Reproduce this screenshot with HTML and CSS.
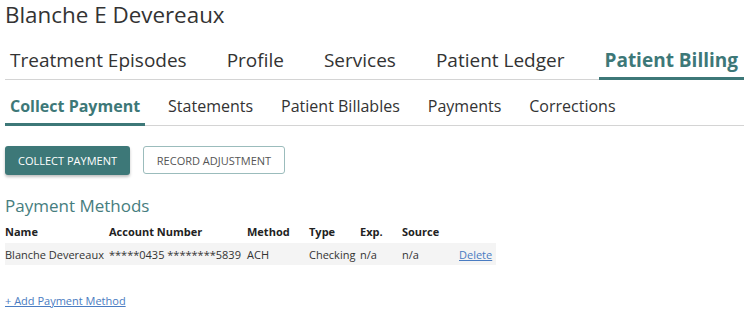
FILE: index.html
```html
<!DOCTYPE html>
<html lang="en">
<head>
    <meta charset="UTF-8">
    <meta name="viewport" content="width=device-width, initial-scale=1.0">
    <title>Patient Billing</title>
    <link rel="stylesheet" href="styles.css">
</head>
<body>
    <div class="page">
        <h1 class="patient-name">Blanche E Devereaux</h1>

        <div class="tabs">
            <a class="tab">Treatment Episodes</a>
            <a class="tab">Profile</a>
            <a class="tab">Services</a>
            <a class="tab">Patient Ledger</a>
            <a class="tab active">Patient Billing</a>
        </div>

        <div class="subtabs">
            <a class="subtab active">Collect Payment</a>
            <a class="subtab">Statements</a>
            <a class="subtab">Patient Billables</a>
            <a class="subtab">Payments</a>
            <a class="subtab">Corrections</a>
        </div>

        <div class="actions">
            <button class="btn btn-primary">COLLECT PAYMENT</button>
            <button class="btn btn-outline">RECORD ADJUSTMENT</button>
        </div>

        <h2 class="section-title">Payment Methods</h2>
        <table class="methods">
            <colgroup>
                <col class="c-name">
                <col class="c-acct">
                <col class="c-method">
                <col class="c-type">
                <col class="c-exp">
                <col class="c-source">
                <col class="c-del">
            </colgroup>
            <thead>
                <tr>
                    <th>Name</th>
                    <th>Account Number</th>
                    <th>Method</th>
                    <th>Type</th>
                    <th>Exp.</th>
                    <th>Source</th>
                    <th></th>
                </tr>
            </thead>
            <tbody>
                <tr>
                    <td>Blanche Devereaux</td>
                    <td>*****0435 ********5839</td>
                    <td>ACH</td>
                    <td>Checking</td>
                    <td>n/a</td>
                    <td>n/a</td>
                    <td><a href="#" class="link">Delete</a></td>
                </tr>
            </tbody>
        </table>

        <a href="#" class="link add-link">+ Add Payment Method</a>
    </div>
</body>
</html>
```

FILE: styles.css
```css
*{
    margin: 0;
    padding: 0;
    box-sizing: border-box;
    font-family: "Open Sans", sans-serif;
}
body{
    background: #fff;
    color: #333;
}
.page{
    padding: 0 0 0 5px;
}
.patient-name{
    font-size: 22.4px;
    font-weight: 400;
    line-height: 30px;
    margin-bottom: 16px;
}

/* top tabs */
.tabs{
    display: flex;
    gap: 31px;
    border-bottom: 1px solid #d4d4d4;
    white-space: nowrap;
}
.tab{
    font-size: 19px;
    line-height: 28px;
    padding: 0 4px 3px 5px;
    border-bottom: 3px solid transparent;
    margin-bottom: -1px;
}
.tab.active{
    color: #3d7878;
    font-weight: 700;
    border-bottom-color: #3d7878;
    padding-right: 8px;
}

/* sub tabs */
.subtabs{
    display: flex;
    gap: 18px;
    margin-top: 15px;
    border-bottom: 1px solid #d4d4d4;
    white-space: nowrap;
}
.subtab{
    font-size: 16px;
    line-height: 22px;
    padding: 0 5px 6px;
    border-bottom: 3px solid transparent;
    margin-bottom: -1px;
}
.subtab.active{
    color: #3d7878;
    font-weight: 700;
    border-bottom-color: #3d7878;
}

/* buttons */
.actions{
    display: flex;
    gap: 13px;
    margin-top: 20px;
}
.btn{
    height: 29px;
    padding: 0;
    font-size: 11px;
    border-radius: 3px;
    white-space: nowrap;
    text-align: center;
    cursor: pointer;
}
.btn-primary{
    background: #3d7878;
    color: #fff;
    border: none;
    width: 125px;
    box-shadow: 0 2px 3px rgba(0, 0, 0, 0.25);
}
.btn-outline{
    background: #fff;
    color: #555;
    border: 1px solid #9bbcbc;
    width: 142px;
    height: 28px;
}

/* payment methods */
.section-title{
    font-size: 17px;
    font-weight: 400;
    line-height: 24px;
    color: #467d7e;
    margin-top: 19px;
    margin-bottom: 3px;
}
.methods{
    border-collapse: collapse;
    table-layout: fixed;
    width: 491px;
    font-size: 11px;
}
.methods th, .methods td{
    height: 22px;
    text-align: left;
    white-space: nowrap;
    padding: 0;
}
.methods th{
    font-weight: 700;
    color: #222;
    vertical-align: top;
    padding-top: 3px;
}
.methods tbody tr{
    background: #f4f4f4;
}
.c-name{ width: 104px; }
.c-acct{ width: 138px; }
.c-method{ width: 62px; }
.c-type{ width: 51px; }
.c-exp{ width: 42px; }
.c-source{ width: 57px; }
.c-del{ width: 37px; }

.link{
    color: #4a7cc2;
    text-decoration: underline;
}
.add-link{
    display: inline-block;
    margin-top: 25px;
    font-size: 11px;
    line-height: 22px;
}
```
